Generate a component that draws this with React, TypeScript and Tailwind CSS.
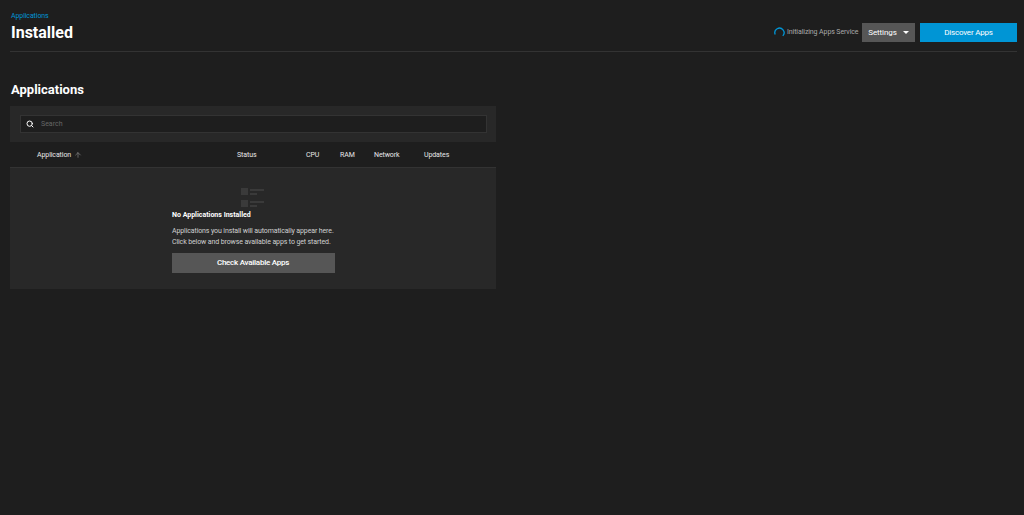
import { Search, ArrowUp } from "lucide-react";

const columns = [
  { label: "Status", width: "w-[69px]" },
  { label: "CPU", width: "w-[34px]" },
  { label: "RAM", width: "w-[34px]" },
  { label: "Network", width: "w-[50px]" },
  { label: "Updates", width: "w-[40px]" },
];

function EmptyIcon() {
  return (
    <svg width="24" height="21" viewBox="0 0 24 21" className="fill-[#3a3a3a]">
      <rect x="0" y="0" width="7" height="7" />
      <rect x="9" y="1" width="14" height="2" />
      <rect x="9" y="5" width="7" height="2" />
      <rect x="0" y="12" width="7" height="7" />
      <rect x="9" y="13" width="14" height="2" />
      <rect x="9" y="17" width="7" height="2" />
    </svg>
  );
}

export default function App() {
  return (
    <div className="h-[515px] w-[1024px] overflow-hidden bg-[#1e1e1e] pl-[10px] pr-[7px] font-['Roboto',sans-serif] text-white">
      <header className="flex h-[52px] items-end justify-between border-b border-[#333333] pb-[8px]">
        <div className="pl-[1px]">
          <div className="text-[7px] leading-[10px] tracking-[-0.1px] text-[#0095d5]">Applications</div>
          <h1 className="mt-[1px] text-[16px] font-bold leading-[21px] text-white">Installed</h1>
        </div>
        <div className="mb-[1px] flex items-center">
          <svg width="11" height="11" viewBox="0 0 11 11" className="mr-[2px]">
            <path d="M1.2 7.5A4.6 4.6 0 1 1 8.8 8.9" fill="none" stroke="#0095d5" strokeWidth="1.3" />
          </svg>
          <span className="mr-[4px] w-[71px] whitespace-nowrap text-[7px] tracking-[-0.1px] text-[#aaaaaa]">Initializing Apps Service</span>
          <button className="flex h-[19px] w-[53px] items-center justify-center gap-[6px] bg-[#565656] text-[8px] tracking-[-0.1px] text-white">
            Settings
            <span className="h-0 w-0 border-x-[3px] border-t-[3px] border-x-transparent border-t-white" />
          </button>
          <button className="ml-[5px] h-[19px] w-[97px] bg-[#0095d5] text-[8px] tracking-[-0.2px] text-white">Discover Apps</button>
        </div>
      </header>

      <h2 className="mt-[28px] pl-[1px] text-[13px] font-bold leading-[20px]">Applications</h2>

      <section className="mt-[6px] w-[486px]">
        <div className="bg-[#282828] px-[10px] py-[9px]">
          <div className="flex h-[18px] w-[467px] items-center border border-[#333333] bg-[#1e1e1e] pl-[5px]">
            <Search size={8} strokeWidth={3} className="text-white" />
            <span className="ml-[7px] text-[7px] text-[#666666]">Search</span>
          </div>
        </div>

        <div className="flex h-[26px] items-center border-b border-[#333333] pl-[27px] pt-[1px] text-[7px] tracking-[-0.1px] text-[#e8e8e8]">
          <div className="flex w-[200px] items-center gap-[3px]">
            Application
            <ArrowUp size={8} className="text-[#888888]" />
          </div>
          {columns.map((c) => (
            <div key={c.label} className={c.width}>{c.label}</div>
          ))}
        </div>

        <div className="flex h-[121px] flex-col items-center bg-[#282828] pt-[20px]">
          <EmptyIcon />
          <div className="w-[163px]">
            <div className="mt-[1px] pl-[0.5px] text-[7px] font-bold leading-[10px]">No Applications Installed</div>
            <p className="mt-[6px] whitespace-nowrap pl-[0.5px] text-[7px] leading-[11px] tracking-[-0.12px] text-[#d0d0d0]">
              Applications you install will automatically appear here.
              <br />
              Click below and browse available apps to get started.
            </p>
            <button className="mt-[5px] h-[20px] w-[163px] bg-[#565656] text-[8px] font-medium tracking-[-0.25px] text-white">Check Available Apps</button>
          </div>
        </div>
      </section>
    </div>
  );
}
